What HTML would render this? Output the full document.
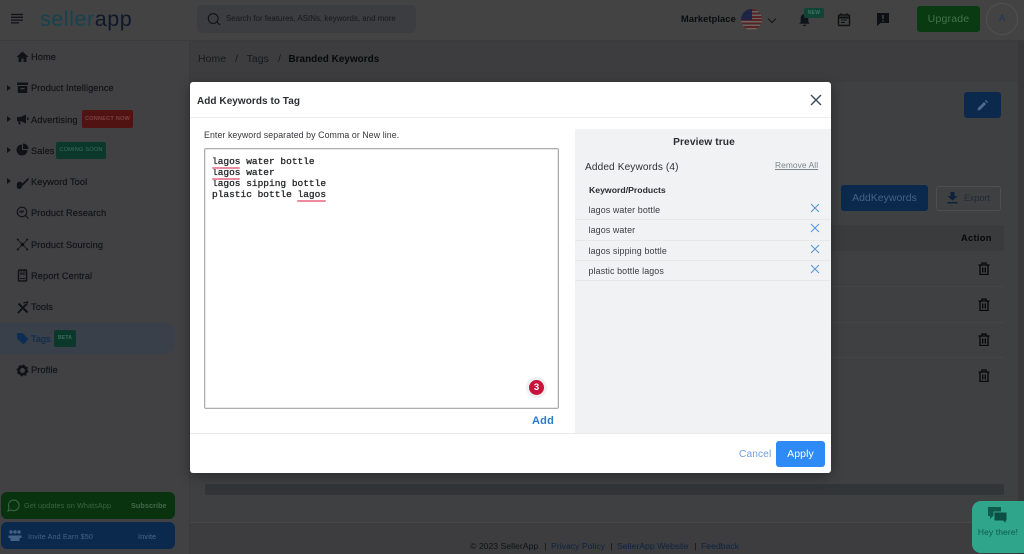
<!DOCTYPE html>
<html lang="en"><head><meta charset="utf-8"><title>Add Keywords to Tag</title>
<style>
*{box-sizing:border-box}
html,body{margin:0;padding:0;width:1024px;height:554px;overflow:hidden;background:#3a3b3c;font-family:"Liberation Sans",sans-serif}
.a{position:absolute;white-space:nowrap}
#bg{position:absolute;left:0;top:0;width:1024px;height:554px;filter:blur(.3px) brightness(.74);overflow:hidden}
.nav{position:absolute;left:31px;font-size:9.300px;color:#16181c;-webkit-text-stroke:.15px #16181c;letter-spacing:.05px;line-height:12px;white-space:nowrap;margin-top:1px}
.ic{position:absolute;left:16px;width:13px;height:13px}
.car{position:absolute;left:7px;width:0;height:0;border-left:4px solid #16181c;border-top:3.5px solid transparent;border-bottom:3.5px solid transparent}
.tag{position:absolute;border-radius:2px;font-size:5.6px;line-height:18px;height:18px;text-align:center;font-weight:bold;letter-spacing:.2px;white-space:nowrap}
#m{position:absolute;left:190px;top:82px;width:641px;height:391px;background:#fff;border-radius:3px;box-shadow:0 3px 12px rgba(0,0,0,.35);filter:blur(.25px)}
.kw{position:absolute;left:0;width:255px;height:20.300px;border-bottom:1px solid #e6e8ea;font-size:8.900px;line-height:20px;padding-left:13.500px;color:#3a3d42;letter-spacing:.12px;white-space:nowrap}
.x{position:absolute;left:235px;top:3px}
.wv{position:absolute;height:1.500px;background:#ee8aa0;border-radius:1px}
.ft{position:absolute;top:539px;font-size:8.700px;line-height:14px;color:#14161a;white-space:nowrap}
.fl{color:#102e58}
</style></head><body>
<div id="bg">
<div class="a" style="left:0;top:0;width:1024px;height:41px;background:#5a5a5b;border-bottom:1px solid #505052"></div>
<div class="a" style="left:0;top:41px;width:190px;height:513px;background:#58585a;border-right:1px solid #505052"></div>
<div class="a" style="left:190px;top:41px;width:834px;height:513px;background:#525355"></div>
<div class="a" style="left:190px;top:82px;width:834px;height:440px;background:#555658"></div>
<div class="a" style="left:1018px;top:41px;width:6px;height:513px;background:#4b4c4f"></div>

<svg class="a" style="left:11px;top:13px" width="13" height="11"><path d="M0 1.500H12M0 4.300H12M0 7.100H12M0 9.900H8" stroke="#16181c" stroke-width="1.300"/></svg>
<div class="a" style="left:40px;top:4px;font-size:21.500px;line-height:30px;letter-spacing:.55px;color:#1d5a6c">seller<span style="color:#141f38">app</span></div>
<div class="a" style="left:197px;top:5px;width:219px;height:28px;border-radius:5px;background:#505257"></div>
<svg class="a" style="left:207px;top:12px" width="14" height="14" fill="none" stroke="#16181c" stroke-width="1.100"><circle cx="6.200" cy="6.500" r="4.900"/><path d="M10 10l3 3"/></svg>
<div class="a" style="left:226px;top:12px;font-size:7.900px;line-height:13px;letter-spacing:.02px;color:#1e2024">Search for features, ASINs, keywords, and more</div>
<div class="a" style="left:681px;top:12px;font-size:9.300px;line-height:14px;letter-spacing:.1px;font-weight:bold;color:#0e1012">Marketplace</div>
<div class="a" style="left:741px;top:9px;width:21px;height:21px;border-radius:50%;overflow:hidden;background:repeating-linear-gradient(#7a2e2c 0 2px,#8a8a8c 2px 3.4px)"><div style="width:11px;height:11px;background:#27305f"></div></div>
<svg class="a" style="left:767px;top:17px" width="10" height="7" fill="none" stroke="#16181c" stroke-width="1"><path d="M1 1.500l4 4 4-4"/></svg>
<svg class="a" style="left:798px;top:13px" width="13" height="14" fill="#141a24"><path d="M6.500 1c2.600 0 3.800 2 3.800 4.400V9l1.600 1.800H1.100L2.700 9V5.400C2.700 3 3.900 1 6.500 1zM5 11.800h3c0 1-.7 1.500-1.500 1.500S5 12.800 5 11.800z"/></svg>
<div class="tag" style="left:804px;top:8px;width:20px;height:10px;line-height:10px;background:#175c46;color:#4c9e84;font-size:5px">NEW</div>
<svg class="a" style="left:837px;top:12px" width="14" height="15" fill="none" stroke="#14161a" stroke-width="1.400"><rect x="1.500" y="3" width="11" height="10.500" rx="1"/><path d="M1.500 5.500H12.500" stroke-width="2"/><path d="M4 1v2.500M10 1v2.500M4 8h6M4 10.500h4" stroke-width="1"/></svg>
<svg class="a" style="left:876px;top:12px" width="14" height="15"><path d="M1 1h12v10H4.500L1 14z" fill="#12161c"/><path d="M7 3v4M7 8.300v1.500" stroke="#5a5a5b" stroke-width="1.500"/></svg>
<div class="a" style="left:917px;top:6px;width:63px;height:26px;border-radius:3px;background:#0c4e17;color:#5d9a67;font-size:10.500px;line-height:26px;text-align:center;letter-spacing:.2px">Upgrade</div>
<div class="a" style="left:986px;top:3px;width:32px;height:32px;border-radius:50%;border:1px solid #6c6c6e;color:#284a78;font-size:9.500px;line-height:30px;text-align:center">A</div>

<div class="a" style="left:198px;top:51.500px;font-size:10.400px;line-height:15px;letter-spacing:.1px;color:#1e2024">Home<span style="margin:0 8.500px 0 9px">/</span>Tags<span style="margin:0 7.500px 0 9px">/</span><b style="color:#0a0b0d;font-size:9.900px;letter-spacing:.05px">Branded Keywords</b></div>

<svg class="ic" style="top:50px" viewBox="0 0 13 13" fill="#16181c"><path d="M6.500 1.500L.5 7h2v5h3V8.500h2V12h3V7h2z"/></svg>
<div class="nav" style="top:50px">Home</div>
<div class="car" style="top:85px"></div>
<svg class="ic" style="top:81px" viewBox="0 0 13 13" fill="#16181c"><path d="M1 1.500h11V4H1zM1.800 5h9.400v7H1.800zM4.500 7v1.200h4V7z" fill-rule="evenodd"/></svg>
<div class="nav" style="top:81px">Product Intelligence</div>
<div class="car" style="top:116px"></div>
<svg class="ic" style="top:113px" viewBox="0 0 13 13" fill="#16181c"><path d="M1 4h3.500L10 1.500v9L4.500 8H4l.7 3.500H2.800L2 8H1zM11 4.500h1.500v2.500H11z"/></svg>
<div class="nav" style="top:113px">Advertising</div>
<div class="tag" style="left:82px;top:110px;width:51px;background:#6e1818;color:#a65a5a">CONNECT NOW</div>
<div class="car" style="top:147px"></div>
<svg class="ic" style="top:143px" viewBox="0 0 13 13" fill="#16181c"><path d="M6 1.500A5.500 5.500 0 1 0 11.500 7H6zM7 .5V6h5.500A5.500 5.500 0 0 0 7 .5z"/></svg>
<div class="nav" style="top:144px">Sales</div>
<div class="tag" style="left:56px;top:142px;width:50px;height:17px;line-height:17px;background:#104c3a;color:#4f9680;font-weight:normal">COMING SOON</div>
<div class="car" style="top:178px"></div>
<svg class="ic" style="top:176px" viewBox="0 0 13 13" fill="#16181c"><path d="M1 9.500a2.500 2.500 0 1 0 4.800 1L12.500 4V1.500L6.300 7.500A2.500 2.500 0 0 0 1 9.500z"/></svg>
<div class="nav" style="top:175px">Keyword Tool</div>
<svg class="ic" style="top:206px" viewBox="0 0 13 13" fill="none" stroke="#16181c" stroke-width="1.100"><circle cx="6" cy="6" r="4.800"/><path d="M9.500 9.500l3 3M3.500 6.500l1.500-1.500 1 1.500 1.800-2"/></svg>
<div class="nav" style="top:206px">Product Research</div>
<svg class="ic" style="top:238px" viewBox="0 0 13 13" fill="#16181c" stroke="#16181c"><circle cx="6.500" cy="6.500" r="1.300"/><path d="M2 2l9 9M11 2l-9 9" stroke-width=".8"/><path d="M.8 1.500h2M10.200 1.500h2M.8 11.500h2M10.200 11.500h2" stroke-width="1.400"/></svg>
<div class="nav" style="top:238px">Product Sourcing</div>
<svg class="ic" style="top:269px" viewBox="0 0 13 13" fill="none" stroke="#16181c" stroke-width="1.500"><rect x="2.500" y="1" width="8" height="11" rx=".8"/><path d="M5 1v4.500l1.500-1 1.500 1V1M4 9.500h5" stroke-width="1"/></svg>
<div class="nav" style="top:269px">Report Central</div>
<svg class="ic" style="top:301px" viewBox="0 0 13 13" fill="none" stroke="#16181c" stroke-width="2"><path d="M2 12L10 3.500M2.500 2.500L11.500 11.500"/><path d="M7.500 2l4-1-1 3.500" stroke-width="1.200"/></svg>
<div class="nav" style="top:300px">Tools</div>
<div class="a" style="left:0;top:323px;width:175px;height:31px;background:#4e5764;border-radius:0 10px 10px 0"></div>
<svg class="ic" style="top:332px" viewBox="0 0 13 13" fill="#123d70"><path d="M1 1h5.500l6 6-5 5.500-6.500-6z"/></svg>
<div class="nav" style="top:332px;color:#163a66;-webkit-text-stroke:.15px #163a66">Tags</div>
<div class="tag" style="left:54px;top:330px;width:22px;height:17px;line-height:17px;background:#104c3a;color:#4f9680;font-size:5px">BETA</div>
<svg class="ic" style="top:364px" viewBox="0 0 13 13" fill="none" stroke="#16181c" stroke-width="2.600"><circle cx="6.500" cy="6.500" r="3.800"/><circle cx="6.500" cy="6.500" r="5.300" stroke-width="1.300" stroke-dasharray="2 2.160"/></svg>
<div class="nav" style="top:363px">Profile</div>

<div class="a" style="left:1px;top:492px;width:174px;height:27px;border-radius:6px;background:#0c4313"></div>
<svg class="a" style="left:7px;top:499px" width="13" height="13" fill="none" stroke="#4f8a58" stroke-width="1.100"><path d="M1 12l1-3.300A5.300 5.300 0 1 1 4.200 11z"/></svg>
<div class="a" style="left:24px;top:500px;font-size:7.200px;line-height:11px;letter-spacing:.12px;color:#4f8a58">Get updates on WhatsApp</div>
<div class="a" style="left:131px;top:500px;font-size:7.200px;line-height:11px;font-weight:bold;letter-spacing:.1px;color:#5c8f63">Subscribe</div>
<div class="a" style="left:1px;top:522px;width:174px;height:27px;border-radius:6px;background:#0f3768"></div>
<svg class="a" style="left:8px;top:529px" width="14" height="13" fill="#5a84b4"><circle cx="3" cy="3" r="1.700"/><circle cx="7" cy="3" r="1.700"/><circle cx="11" cy="3" r="1.700"/><path d="M.5 6.500h13V9h-2v3h-9V9h-2z"/></svg>
<div class="a" style="left:28px;top:531px;font-size:7.200px;line-height:11px;letter-spacing:.12px;color:#5a84b4">Invite And Earn $50</div>
<div class="a" style="left:138px;top:531px;font-size:7.200px;line-height:11px;letter-spacing:.2px;color:#6a8eba">Invite</div>

<div class="a" style="left:964px;top:92px;width:37px;height:26px;border-radius:3px;background:#0f3768"></div>
<svg class="a" style="left:976px;top:99px" width="13" height="13"><path d="M1.500 11.500L2 9l6-6 2 2-6 6zM9 2l1-1 2 2-1 1z" fill="#6d8fb8"/></svg>
<div class="a" style="left:841px;top:185px;width:87px;height:26px;border-radius:3px;background:#0f3768;color:#5a84b4;font-size:10.500px;line-height:26px;text-align:center">AddKeywords</div>
<div class="a" style="left:936px;top:186px;width:65px;height:25px;border-radius:3px;border:1px solid #68696b;color:#2a3a50;font-size:9px;line-height:23px;padding-left:27px">Export</div>
<svg class="a" style="left:947px;top:192px" width="11" height="12" fill="#122c50"><path d="M3.500 0h4v4h3L5.500 8.500.5 4h3zM.5 10h10v1.500H.5z"/></svg>
<div class="a" style="left:831px;top:225px;width:173px;height:26px;background:#4f5052"></div>
<div class="a" style="left:961px;top:232px;font-size:9.300px;line-height:13px;font-weight:bold;letter-spacing:.3px;color:#08090b">Action</div>
<div class="a" style="left:831px;top:286px;width:173px;height:1px;background:#5c5d5f"></div>
<div class="a" style="left:831px;top:322px;width:173px;height:1px;background:#5c5d5f"></div>
<div class="a" style="left:831px;top:357px;width:173px;height:1px;background:#5c5d5f"></div>
<svg width="0" height="0" style="position:absolute"><defs><g id="tr" fill="none" stroke="#08090b" stroke-width="1.300"><path d="M.5 3h11M4 3V1h4v2M2 3v9.500h8V3M4.700 5.500v5M7.300 5.500v5"/></g></defs></svg>
<svg class="a" style="left:978px;top:262px" width="12" height="13"><use href="#tr"/></svg>
<svg class="a" style="left:978px;top:298px" width="12" height="13"><use href="#tr"/></svg>
<svg class="a" style="left:978px;top:333px" width="12" height="13"><use href="#tr"/></svg>
<svg class="a" style="left:978px;top:369px" width="12" height="13"><use href="#tr"/></svg>
<div class="a" style="left:205px;top:484px;width:799px;height:11px;background:#44474c;border-radius:2px"></div>
<div class="a" style="left:190px;top:522px;width:828px;height:1px;background:#5e5f61"></div>
<div class="ft" style="left:470px">© 2023 SellerApp</div>
<div class="ft" style="left:544.500px">|</div>
<div class="ft fl" style="left:551px">Privacy Policy</div>
<div class="ft" style="left:610.500px">|</div>
<div class="ft fl" style="left:617px">SellerApp Website</div>
<div class="ft" style="left:694.500px">|</div>
<div class="ft fl" style="left:701px">Feedback</div>
<div class="a" style="left:972px;top:501px;width:52px;height:52px;background:#3fe0bc;border-radius:9px 0 0 9px"></div>
<svg class="a" style="left:988px;top:507px" width="20" height="18"><path d="M0 0h13v9H5l-3 3V9H0z" fill="#147a66"/><path d="M6 5h13v9h-1v3l-3-3H6z" fill="#10695a" stroke="#3fe0bc"/></svg>
<div class="a" style="left:972px;top:526px;width:52px;text-align:center;font-size:8.500px;line-height:12px;letter-spacing:.1px;color:#147a66">Hey there!</div>
</div>

<div id="m">
<div class="a" style="left:7px;top:11.500px;font-size:10px;line-height:15px;font-weight:bold;letter-spacing:.05px;color:#2a2d31">Add Keywords to Tag</div>
<svg class="a" style="left:620px;top:12px" width="12" height="12" fill="none" stroke="#3c4b5c" stroke-width="1.400"><path d="M1 1l10 10M11 1L1 11"/></svg>
<div class="a" style="left:0;top:35px;width:641px;height:1px;background:#eceef0"></div>
<div class="a" style="left:14px;top:46.500px;font-size:8.800px;line-height:13px;letter-spacing:.08px;color:#33363a">Enter keyword separated by Comma or New line.</div>
<div class="a" style="left:14px;top:66px;width:355px;height:261px;border:1px solid #adadad;border-radius:2px;box-shadow:inset 0 0 0 .5px #d0d0d0;background:#fff"></div>
<div class="a" style="left:22px;top:74px;font-family:'Liberation Mono',monospace;font-size:9.500px;line-height:11px;color:#26282b;-webkit-text-stroke:.3px #26282b;white-space:pre">lagos water bottle
lagos water
lagos sipping bottle
plastic bottle lagos</div>
<div class="wv" style="left:22px;top:85px;width:28px"></div>
<div class="wv" style="left:22px;top:96px;width:28px"></div>
<div class="wv" style="left:107px;top:118px;width:29px"></div>
<div class="a" style="left:336px;top:295px;width:21px;height:21px;border-radius:50%;background:#eef0f1"></div>
<div class="a" style="left:339px;top:298px;width:15px;height:15px;border-radius:50%;background:#c8143a;color:#fff;font-size:9.500px;font-weight:bold;line-height:15px;text-align:center">3</div>
<div class="a" style="left:342px;top:331px;font-size:11px;line-height:16px;font-weight:bold;letter-spacing:.2px;color:#2a78d0">Add</div>

<div class="a" style="left:385px;top:47px;width:256px;height:304px;background:#f1f2f4">
  <div class="a" style="left:1px;width:256px;top:7px;text-align:center;font-size:10.200px;line-height:14px;font-weight:bold;letter-spacing:.1px;color:#2a2d31">Preview true</div>
  <div class="a" style="left:10px;top:31.500px;font-size:10.100px;line-height:14px;letter-spacing:.12px;color:#2e3135">Added Keywords (4)</div>
  <div class="a" style="left:200px;top:30px;font-size:8.400px;line-height:12px;text-decoration:underline;letter-spacing:.08px;color:#7c858f">Remove All</div>
  <div class="a" style="left:14px;top:55px;font-size:8.700px;line-height:13px;font-weight:bold;color:#2a2d31">Keyword/Products</div>
  <div class="kw" style="top:71px">lagos water bottle<svg class="x" width="10" height="10" fill="none" stroke="#5a94d6" stroke-width="1"><path d="M1 1l8 8M9 1L1 9"/></svg></div>
  <div class="kw" style="top:91.300px">lagos water<svg class="x" width="10" height="10" fill="none" stroke="#5a94d6" stroke-width="1"><path d="M1 1l8 8M9 1L1 9"/></svg></div>
  <div class="kw" style="top:111.600px">lagos sipping bottle<svg class="x" width="10" height="10" fill="none" stroke="#5a94d6" stroke-width="1"><path d="M1 1l8 8M9 1L1 9"/></svg></div>
  <div class="kw" style="top:131.900px">plastic bottle lagos<svg class="x" width="10" height="10" fill="none" stroke="#5a94d6" stroke-width="1"><path d="M1 1l8 8M9 1L1 9"/></svg></div>
</div>
<div class="a" style="left:0;top:351px;width:641px;height:1px;background:#e8eaec"></div>
<div class="a" style="left:549px;top:364.500px;font-size:10.200px;line-height:15px;letter-spacing:.1px;color:#6f9fe0">Cancel</div>
<div class="a" style="left:586px;top:359px;width:49px;height:26px;border-radius:3px;background:#2e8bf5;color:#fff;font-size:10.500px;line-height:26px;text-align:center;letter-spacing:.1px">Apply</div>
</div>
</body></html>
